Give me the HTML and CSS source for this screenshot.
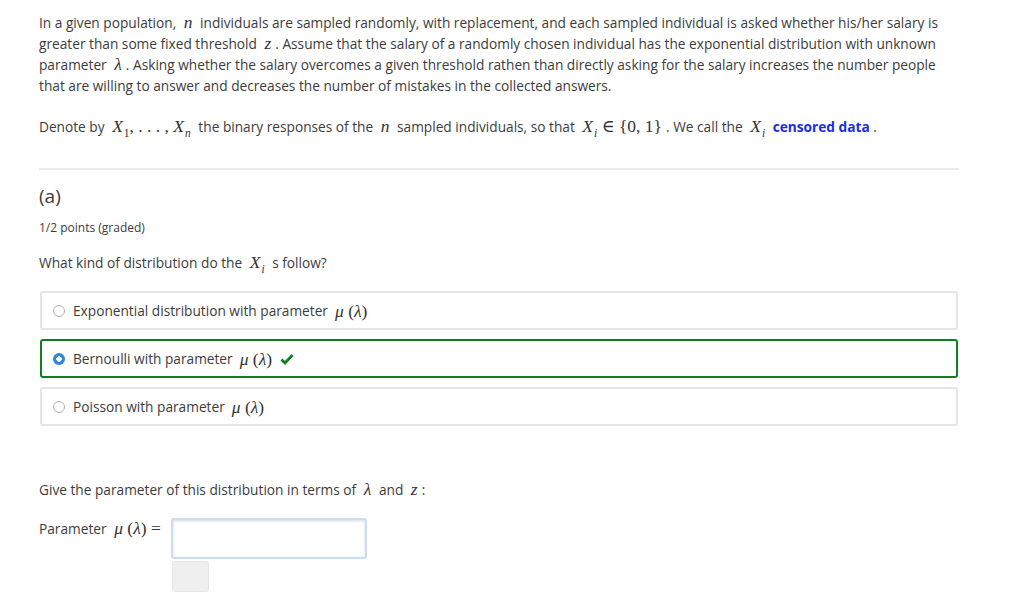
FILE: index.html
```html
<!DOCTYPE html>
<html lang="en">
<head>
    <meta charset="UTF-8">
    <title>Problem (a)</title>
    <link rel="stylesheet" href="styles.css">
</head>
<body>
    <div class="problem">
        <p>In a given population, <span class="m">n</span> individuals are sampled randomly, with replacement, and each sampled individual is asked whether his/her salary is greater than some fixed threshold <span class="m">z</span>. Assume that the salary of a randomly chosen individual has the exponential distribution with unknown parameter <span class="m">λ</span>. Asking whether the salary overcomes a given threshold rathen than directly asking for the salary increases the number people that are willing to answer and decreases the number of mistakes in the collected answers.</p>
        <p>Denote by <span class="m">X<sub>1</sub><span class="r">, . . . ,</span> X<sub class="v">n</sub></span> the binary responses of the <span class="m">n</span> sampled individuals, so that <span class="m">X<sub class="v">i</sub> <span class="r">∈ {0, 1}</span></span>. We call the <span class="m">X<sub class="v">i</sub></span> <strong class="term">censored data</strong> .</p>

        <hr>

        <h3>(a)</h3>
        <div class="points">1/2 points (graded)</div>
        <p class="question">What kind of distribution do the <span class="m">X<sub class="v">i</sub></span> s follow?</p>

        <div class="choices">
            <label class="choice">
                <span class="radio"></span>
                Exponential distribution with parameter <span class="m">μ <span class="r">(</span>λ<span class="r">)</span></span>
            </label>
            <label class="choice correct">
                <span class="radio checked"></span>
                Bernoulli with parameter <span class="m">μ <span class="r">(</span>λ<span class="r">)</span></span>
                <svg class="tick" width="14" height="12" viewBox="0 0 14 12"><path d="M1.5 6.5 L5 10 L12.5 2" fill="none" stroke="#0e7f22" stroke-width="2.8"/></svg>
            </label>
            <label class="choice">
                <span class="radio"></span>
                Poisson with parameter <span class="m">μ <span class="r">(</span>λ<span class="r">)</span></span>
            </label>
        </div>

        <p class="question second">Give the parameter of this distribution in terms of <span class="m">λ</span> and <span class="m">z</span>:</p>

        <div class="answer">
            <span class="answer-label">Parameter <span class="m">μ <span class="r">(</span>λ<span class="r">) =</span></span></span>
            <input type="text" class="answer-input">
            <button class="submit"></button>
        </div>
    </div>
</body>
</html>
```

FILE: styles.css
```css
body {
    margin: 0;
    background: #fff;
    font-family: "Open Sans", sans-serif;
    font-size: 13.7px;
    line-height: 21px;
    color: #3c3c3c;
}
.problem {
    width: 920px;
    padding: 12px 0 0 39px;
}
p {
    margin: 0 0 20px 0;
}
.m {
    font-family: "Liberation Serif", "DejaVu Serif", serif;
    font-style: italic;
    font-size: 17.5px;
    line-height: 18px;
    margin: 0 4px;
    color: #333;
}
.m .r {
    font-style: normal;
}
.m sub {
    font-size: 11.5px;
    line-height: 0;
    font-style: normal;
    margin-left: 1px;
}
.m sub.v {
    font-style: italic;
}
.term {
    color: #1a2de6;
    font-weight: 700;
}
hr {
    border: none;
    border-top: 2px solid #ececec;
    margin: 31px 0 0 0;
}
h3 {
    margin: 13px 0 0 0;
    font-size: 19px;
    line-height: 26px;
    font-weight: 400;
}
.points {
    margin-top: 10px;
    font-size: 12px;
    line-height: 18px;
}
.question {
    margin: 15px 0 0 0;
}
.choices {
    margin-top: 18px;
    display: flex;
    flex-direction: column;
    gap: 9px;
    padding-left: 1px;
    width: 918px;
}
.choice {
    display: flex;
    align-items: center;
    height: 35px;
    padding: 0 11px;
    border: 2px solid #e5e5e5;
    border-radius: 3px;
}
.choice.correct {
    border-color: #0e7f22;
}
.radio {
    width: 12px;
    height: 12px;
    border: 1px solid #b0b0b0;
    border-radius: 50%;
    margin-right: 8px;
    background: #fff;
    box-sizing: border-box;
}
.radio.checked {
    border: none;
    background: radial-gradient(circle, #fff 0 2.5px, #2f86e0 3px);
}
.choice .m {
    margin-left: 7px;
}
.tick {
    margin-left: 4px;
}
.question.second {
    margin-top: 53px;
}
.answer {
    margin-top: 18px;
    display: grid;
    grid-template-columns: max-content 196px;
    column-gap: 6px;
    row-gap: 2px;
    align-items: start;
}
.answer-input {
    box-sizing: border-box;
    width: 196px;
    height: 41px;
    margin: 0;
    border: 2px solid #c9def3;
    border-radius: 3px;
    box-shadow: inset 0 1px 3px rgba(0, 0, 0, 0.15);
}
.submit {
    grid-column: 2;
    width: 37px;
    height: 31px;
    margin-left: 1px;
    border: 1px solid #e6e6e6;
    border-radius: 3px;
    background: #efefef;
}
```
